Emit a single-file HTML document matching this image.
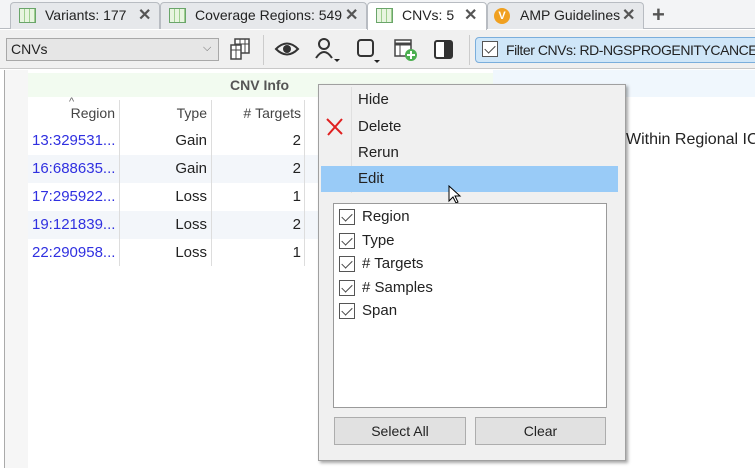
<!DOCTYPE html>
<html><head><style>
*{box-sizing:border-box;margin:0;padding:0}
body{width:755px;height:468px;overflow:hidden;background:#fff;font-family:"Liberation Sans",Tahoma,sans-serif;font-size:14px;color:#222;position:relative}
.a{position:absolute}
.tab{position:absolute;top:2px;height:27px;background:#e6e8eb;border:1px solid #b8bcc2;border-bottom:none;border-radius:4px 4px 0 0;font-size:14px;line-height:25px;padding-left:34px;color:#222}
.grid{position:absolute;left:8px;top:5px;width:17px;height:15px;border:1px solid #6aa56a;background:repeating-linear-gradient(90deg,#e8f5e0 0 4px,#9fcf8f 4px 5px),#e8f5e0}
.x{position:absolute;font-weight:bold;font-size:16px;color:#555}
.cell{position:absolute;font-size:15px;text-align:right}
.blue{color:#3030e0}
.cb{position:absolute;left:8px;width:16px;height:16px;border:1px solid #555;background:#fff}
.cb:after{content:"";position:absolute;left:4px;top:1px;width:5px;height:9px;border:solid #444;border-width:0 1.5px 1.5px 0;transform:rotate(45deg)}
.btn{position:absolute;top:417px;height:28px;background:#e1e1e1;border:1px solid #adadad;text-align:center;line-height:26px;font-size:14px}
</style></head><body>
<div class="a" style="left:0;top:0;width:755px;height:29px;background:#f3f4f6;border-bottom:1px solid #b8bcc2"></div>
<div class="tab" style="left:10px;width:150px"><div class="grid"></div>Variants: 177<span class="x" style="left:127px">✕</span></div>
<div class="tab" style="left:160px;width:207px"><div class="grid"></div>Coverage Regions: 549<span class="x" style="left:184px">✕</span></div>
<div class="tab" style="left:367px;width:120px;background:#fff;height:28px"><div class="grid"></div>CNVs: 5<span class="x" style="left:96px">✕</span></div>
<div class="tab" style="left:487px;width:157px;padding-left:32px"><div class="a" style="left:6px;top:5px;width:16px;height:16px;border-radius:50%;background:#f0a020;color:#fff;font-size:11px;line-height:16px;text-align:center;font-weight:bold">V</div>AMP Guidelines<span class="x" style="left:134px">✕</span></div>
<div class="a" style="left:652px;top:2px;font-size:22px;color:#555;font-weight:bold">+</div>
<div class="a" style="left:0;top:30px;width:755px;height:39px;background:#f0f0f0;border-bottom:1px solid #c8c8c8"></div>
<div class="a" style="left:6px;top:38px;width:213px;height:23px;background:#e6e6e6;border:1px solid #a8a8a8;font-size:14px;line-height:21px;padding-left:4px">CNVs<span class="a" style="left:196px;top:-1px;color:#666;font-size:11px">⌵</span></div>
<svg class="a" style="left:228px;top:36px" width="24" height="26"><rect x="7" y="3" width="14" height="14" fill="#fff" stroke="#444" stroke-width="1.5"/><path d="M7 8h14M12 3v14M17 3v14" stroke="#444"/><rect x="3" y="9" width="10" height="14" fill="#fff" stroke="#444" stroke-width="1.5"/><path d="M3 14h10M8 9v14" stroke="#444"/></svg>
<div class="a" style="left:263px;top:35px;width:1px;height:30px;background:#ccc"></div>
<svg class="a" style="left:274px;top:38px" width="26" height="22"><path d="M2 11Q13 0 24 11Q13 22 2 11Z" fill="none" stroke="#333" stroke-width="2"/><circle cx="13" cy="11" r="4" fill="#333"/></svg>
<svg class="a" style="left:314px;top:37px" width="30" height="28"><circle cx="10" cy="7" r="5" fill="none" stroke="#333" stroke-width="2"/><path d="M2 21Q10 9 18 21" fill="none" stroke="#333" stroke-width="2"/><path d="M20 22h6l-3 3z" fill="#222"/></svg>
<svg class="a" style="left:356px;top:37px" width="30" height="28"><rect x="2" y="3" width="15" height="16" rx="3" fill="none" stroke="#333" stroke-width="2"/><path d="M18 23h6l-3 3z" fill="#222"/></svg>
<svg class="a" style="left:393px;top:37px" width="26" height="26"><rect x="2" y="3" width="16" height="16" fill="#fff" stroke="#444" stroke-width="1.5"/><path d="M2 7h16" stroke="#444" stroke-width="3"/><path d="M7 7v12" stroke="#444"/><circle cx="18" cy="18" r="6" fill="#4caf50"/><path d="M18 14v8M14 18h8" stroke="#fff" stroke-width="2"/></svg>
<svg class="a" style="left:433px;top:39px" width="22" height="22"><rect x="2" y="2" width="17" height="17" rx="2" fill="#fff" stroke="#333" stroke-width="2"/><rect x="11" y="2" width="8" height="17" fill="#333"/></svg>
<div class="a" style="left:469px;top:35px;width:1px;height:30px;background:#ccc"></div>
<div class="a" style="left:475px;top:37px;width:290px;height:26px;background:#cfe6f8;border:1px solid #7aaedc;border-radius:4px;font-size:14px;line-height:24px;padding-left:30px;white-space:nowrap;letter-spacing:-0.45px">Filter CNVs: RD-NGSPROGENITYCANCER-</div>
<div class="cb" style="left:482px;top:41px"></div>
<div class="a" style="left:4px;top:70px;width:1px;height:398px;background:#aaa"></div>
<div class="a" style="left:5px;top:70px;width:23px;height:398px;background:#f6f6f6"></div>
<div class="a" style="left:28px;top:73px;width:465px;height:24px;background:#f2fbf0"></div>
<div class="a" style="left:493px;top:70px;width:262px;height:27px;background:#f0f7fd"></div>
<div class="a" style="left:230px;top:77px;font-weight:bold;font-size:14px;color:#555">CNV Info</div>
<div class="a" style="left:69px;top:96px;font-size:11px;color:#666">^</div>
<div class="cell" style="left:28px;top:105px;width:87px;color:#444;font-size:14px">Region</div>
<div class="cell" style="left:120px;top:105px;width:87px;color:#444;font-size:14px">Type</div>
<div class="cell" style="left:212px;top:105px;width:89px;color:#444;font-size:14px">#&nbsp;Targets</div>
<div class="a" style="left:28px;top:155px;width:290px;height:28px;background:#f3f6fa"></div>
<div class="a" style="left:28px;top:211px;width:290px;height:28px;background:#f3f6fa"></div>
<div class="a" style="left:119px;top:100px;width:1px;height:166px;background:#ddd"></div>
<div class="a" style="left:211px;top:100px;width:1px;height:166px;background:#ddd"></div>
<div class="a" style="left:304px;top:100px;width:1px;height:166px;background:#ddd"></div>
<div class="cell blue" style="left:32px;top:132px">13:329531...</div><div class="cell" style="left:120px;top:132px;width:87px">Gain</div><div class="cell" style="left:212px;top:132px;width:89px">2</div>
<div class="cell blue" style="left:32px;top:160px">16:688635...</div><div class="cell" style="left:120px;top:160px;width:87px">Gain</div><div class="cell" style="left:212px;top:160px;width:89px">2</div>
<div class="cell blue" style="left:32px;top:188px">17:295922...</div><div class="cell" style="left:120px;top:188px;width:87px">Loss</div><div class="cell" style="left:212px;top:188px;width:89px">1</div>
<div class="cell blue" style="left:32px;top:216px">19:121839...</div><div class="cell" style="left:120px;top:216px;width:87px">Loss</div><div class="cell" style="left:212px;top:216px;width:89px">2</div>
<div class="cell blue" style="left:32px;top:244px">22:290958...</div><div class="cell" style="left:120px;top:244px;width:87px">Loss</div><div class="cell" style="left:212px;top:244px;width:89px">1</div>
<div class="a" style="left:626px;top:131px;font-size:16px;white-space:nowrap">Within Regional IC</div>
<div class="a" style="left:318px;top:84px;width:308px;height:377px;background:#f0f0f0;border:1px solid #a0a0a0;box-shadow:2px 2px 3px rgba(0,0,0,.35)"></div>
<div class="a" style="left:351px;top:87px;width:1px;height:106px;background:#e0e0e0"></div>
<div class="a" style="left:321px;top:166px;width:297px;height:26px;background:#99cbf7"></div>
<div class="a" style="left:358px;top:91px;font-size:15px">Hide</div>
<div class="a" style="left:358px;top:118px;font-size:15px">Delete</div>
<div class="a" style="left:358px;top:144px;font-size:15px">Rerun</div>
<div class="a" style="left:358px;top:170px;font-size:15px">Edit</div>
<svg class="a" style="left:325px;top:117px" width="20" height="20"><path d="M2 2L17 17M17 2L3 18" stroke="#e02020" stroke-width="2"/></svg>
<svg class="a" style="left:448px;top:185px" width="14" height="20"><path d="M1 1v15l4-4 3 6 2-1-3-6h5z" fill="#fff" stroke="#000"/></svg>
<div class="a" style="left:333px;top:203px;width:274px;height:205px;background:#fff;border:1px solid #9a9a9a"></div>
<div class="cb" style="left:339px;top:209px"></div><div class="a" style="left:362px;top:208px;font-size:15px">Region</div>
<div class="cb" style="left:339px;top:233px"></div><div class="a" style="left:362px;top:232px;font-size:15px">Type</div>
<div class="cb" style="left:339px;top:256px"></div><div class="a" style="left:362px;top:255px;font-size:15px"># Targets</div>
<div class="cb" style="left:339px;top:280px"></div><div class="a" style="left:362px;top:279px;font-size:15px"># Samples</div>
<div class="cb" style="left:339px;top:303px"></div><div class="a" style="left:362px;top:302px;font-size:15px">Span</div>
<div class="btn" style="left:334px;width:132px">Select All</div>
<div class="btn" style="left:475px;width:131px">Clear</div>
</body></html>
